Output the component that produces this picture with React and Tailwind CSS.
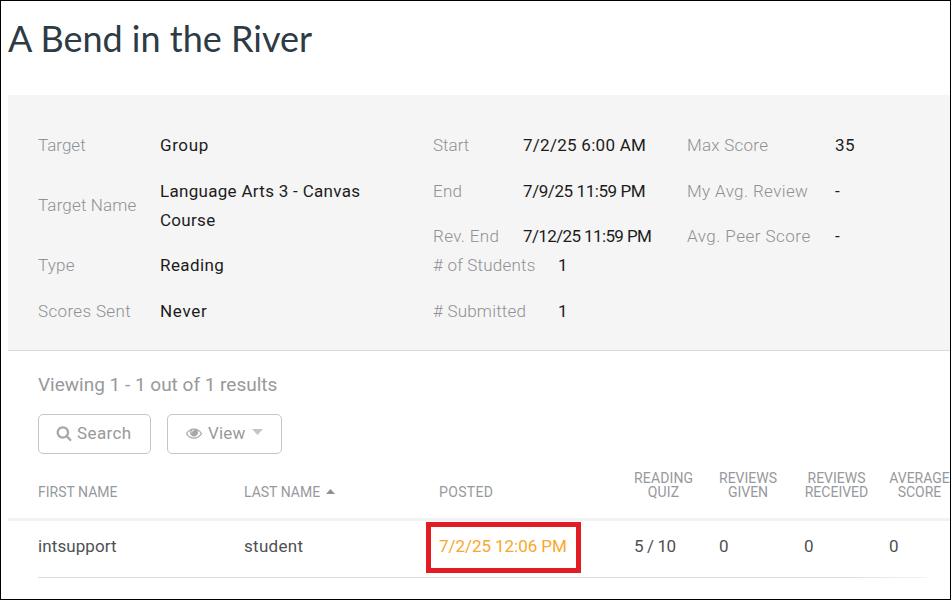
import React from "react";
import cn from "clsx";

const targetDetails = [
  { label: "Target", value: "Group", valueClass: "tracking-[0.6px]" },
  {
    label: "Target Name",
    value: "Language Arts 3 - Canvas Course",
    labelClass: "tracking-[0.15px]",
    valueClass: "tracking-[0.3px]"
  },
  {
    label: "Type",
    value: "Reading",
    labelClass: "tracking-[0.2px]",
    valueClass: "tracking-[0.4px]"
  },
  {
    label: "Scores Sent",
    value: "Never",
    labelClass: "tracking-[0.35px]",
    valueClass: "tracking-[0.7px]"
  }
];

const dates = [
  { label: "Start", value: "7/2/25 6:00 AM", valueClass: "tracking-[0.27px]" },
  {
    label: "End",
    value: "7/9/25 11:59 PM",
    labelClass: "tracking-[0.3px]",
    valueClass: "tracking-[-0.42px]"
  },
  {
    label: "Rev. End",
    value: "7/12/25 11:59 PM",
    labelClass: "tracking-[0.35px]",
    valueClass: "tracking-[-0.62px]"
  }
];

const counts = [
  { label: "# of Students", value: "1", labelClass: "tracking-[0.2px]" },
  { label: "# Submitted", value: "1", labelClass: "tracking-[0.2px]" }
];

const scores = [
  {
    label: "Max Score",
    value: "35",
    labelClass: "tracking-[0.25px]",
    valueClass: "tracking-[0.5px]"
  },
  { label: "My Avg. Review", value: "-", labelClass: "tracking-[0.38px]" },
  { label: "Avg. Peer Score", value: "-", labelClass: "tracking-[0.48px]" }
];

const DetailList = ({ items, columns }) => (
  <dl className={cn("grid items-center gap-y-[16.6px]", columns)}>
    {items.map(item => (
      <React.Fragment key={item.label}>
        <dt className={cn("font-light text-[#8f9194]", item.labelClass)}>
          {item.label}
        </dt>
        <dd className={cn("text-[#1c1c1c]", item.valueClass)}>{item.value}</dd>
      </React.Fragment>
    ))}
  </dl>
);

const SearchIcon = () => (
  <svg className="mr-[5px] size-4 fill-[#a5a7aa]" viewBox="0 0 1792 1792">
    <path d="M1216 832q0-185-131.5-316.5t-316.5-131.5-316.5 131.5-131.5 316.5 131.5 316.5 316.5 131.5 316.5-131.5 131.5-316.5zm512 832q0 52-38 90t-90 38q-54 0-90-38l-343-342q-179 124-399 124-143 0-273.5-55.5t-225-150-150-225-55.5-273.5 55.5-273.5 150-225 225-150 273.5-55.5 273.5 55.5 225 150 150 225 55.5 273.5q0 220-124 399l343 343q37 37 37 90z" />
  </svg>
);

const EyeIcon = () => (
  <svg className="mr-1.5 size-4 fill-[#a5a7aa]" viewBox="0 0 1792 1792">
    <path d="M1664 960q-152-236-381-353 61 104 61 225 0 185-131.5 316.5t-316.5 131.5-316.5-131.5-131.5-316.5q0-121 61-225-229 117-381 353 133 205 333.5 326.5t434.5 121.5 434.5-121.5 333.5-326.5zm-720-384q0-20-14-34t-34-14q-125 0-214.5 89.5t-89.5 214.5q0 20 14 34t34 14 34-14 14-34q0-86 61-147t147-61q20 0 34-14t14-34zm848 384q0 34-20 69-140 230-376.5 368.5t-499.5 138.5-499.5-139-376.5-368q-20-35-20-69t20-69q140-229 376.5-368t499.5-139 499.5 139 376.5 368q20 35 20 69z" />
  </svg>
);

const ToolbarButton = ({ className, children }) => (
  <button
    className={cn(
      "flex h-10 items-center rounded-[5px] border border-[#c4c5c7] pb-0.5 text-[#97999c]",
      className
    )}
  >
    {children}
  </button>
);

const App = () => {
  return (
    <div className="flex h-[600px] w-[951px] flex-col overflow-hidden border border-black bg-white pl-[7px] font-['Roboto',sans-serif] text-[17px] leading-[29px] whitespace-nowrap">
      <h1 className="h-[94px] pt-[14px] font-['Lato',sans-serif] text-[36px] leading-[46px] text-[#2d3b45]">
        A Bend in the River
      </h1>
      <section className="flex h-64 border-b border-[#dcdcdc] bg-[#f5f5f5] pt-9 pl-[30px]">
        <div className="w-[395px]">
          <DetailList
            items={targetDetails}
            columns="grid-cols-[122px_220px] whitespace-normal"
          />
        </div>
        <div className="w-[254px]">
          <DetailList items={dates} columns="grid-cols-[90px_1fr]" />
          <DetailList items={counts} columns="grid-cols-[125px_1fr]" />
        </div>
        <DetailList
          items={scores}
          columns="grid-cols-[148px_80px] content-start"
        />
      </section>
      <section className="flex flex-col pt-[19px]">
        <p className="pl-[30px] text-[19px] text-[#97999c]">
          Viewing 1 - 1 out of 1 results
        </p>
        <div className="mt-[15px] flex gap-4 pl-[30px]">
          <ToolbarButton className="w-[113px] pl-[17px] tracking-[0.4px]">
            <SearchIcon />
            Search
          </ToolbarButton>
          <ToolbarButton className="w-[115px] pl-[18px] tracking-[0.2px]">
            <EyeIcon />
            View
            <svg className="mb-[3px] ml-1.5 h-1.5 w-[11px] fill-[#c4c5c7]" viewBox="0 0 11 6">
              <path d="M0 0h11L5.5 6z" />
            </svg>
          </ToolbarButton>
        </div>
        <div className="mt-[17px] grid h-[50px] grid-cols-[206px_195px_195px_85px_85px_85px_80px] items-end border-b-[3px] border-[#f2f2f2] pb-[19px] pl-[30px] text-[14px] leading-[14px] text-[#97999c] uppercase">
          <span>First Name</span>
          <span className="flex items-center">
            Last Name
            <svg className="mb-px ml-1.5 h-[5px] w-[9px] fill-[#8f9194]" viewBox="0 0 9 5">
              <path d="M0 5h9L4.5 0z" />
            </svg>
          </span>
          <span className="tracking-[0.35px]">Posted</span>
          <span className="w-[59px] text-center tracking-[0.15px]">Reading<br />Quiz</span>
          <span className="w-[58px] text-center">Reviews<br />Given</span>
          <span className="w-[65px] text-center">Reviews<br />Received</span>
          <span className="w-[61px] text-center">Average<br />Score</span>
        </div>
        <div className="relative ml-[30px] grid h-14 grid-cols-[206px_195px_195px_85px_85px_85px_80px] items-center pb-[5px] text-[#4f5052]">
          <span className="tracking-[0.1px]">intsupport</span>
          <span className="tracking-[0.3px]">student</span>
          <a className="tracking-[-0.05px] text-[#f9a72b]">7/2/25 12:06 PM</a>
          <span className="tracking-[-0.4px]">5 / 10</span>
          <span>0</span>
          <span>0</span>
          <span>0</span>
          <div className="absolute top-[1px] left-[388px] h-[51px] w-[155px] border-5 border-[#e31b23]" />
        </div>
        <div className="ml-[30px] h-px w-[889px] bg-linear-to-r from-[#dcdcdc] from-90% to-[#f4f4f4]" />
      </section>
    </div>
  );
};

export default App;
